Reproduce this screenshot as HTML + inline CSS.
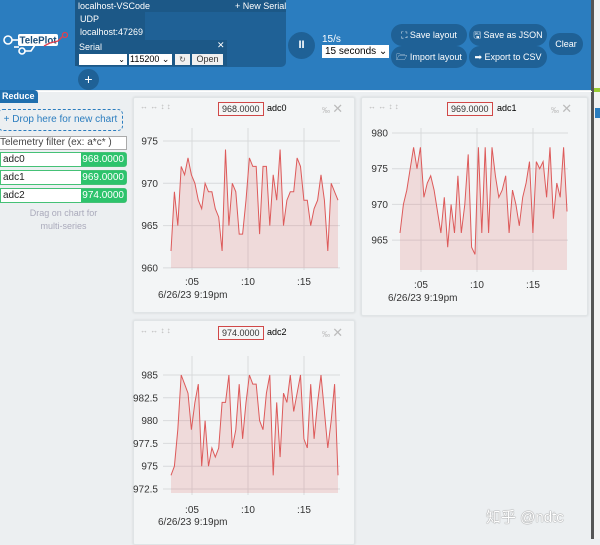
<!DOCTYPE html>
<html><head><meta charset="utf-8"><style>
*{box-sizing:border-box;margin:0;padding:0}
body{width:600px;height:539px;overflow:hidden;background:#eceff1;font-family:"Liberation Sans",sans-serif;position:relative}
.a{position:absolute}
#hdr{left:0;top:0;width:592px;height:90px;background:#2b7dbf}
.pill{position:absolute;background:#1f6196;color:#fff;border-radius:12px;font-size:9px;text-align:center;line-height:22px;height:22px}
.card{position:absolute;background:#f3f5f6;border:1px solid #e0e4e6;border-radius:2px;box-shadow:0 0 2px #d0d4d6}
.val{position:absolute;border:1px solid #d04848;font-size:9px;color:#333;padding:0 3px;line-height:12px;background:#f6f6f6}
.row{position:absolute;left:0;width:127px;height:15px;border:1px solid #45c176;border-radius:0 3px 3px 0;background:#fff;font-size:10px;line-height:13px;padding-left:2px;color:#222}
.row span{position:absolute;right:0;top:0;width:45px;height:13px;background:#2dc36c;color:#fff;text-align:right;padding-right:2px}
</style></head><body>
<div id="hdr" class="a"></div>
<svg class="a" style="left:0;top:26px" width="75" height="32" viewBox="0 0 75 32">
<g fill="none" stroke="#fff" stroke-width="1.6"><circle cx="8" cy="14" r="4"/><path d="M12 14h6"/><circle cx="22" cy="25" r="3"/><path d="M25 25h6l4-6"/><path d="M14 21h5"/></g>
<rect x="18" y="8" width="40" height="12" rx="2" fill="#fff"/>
<text x="19.5" y="17.5" font-size="10" font-weight="bold" fill="#1c4f7a" textLength="37" lengthAdjust="spacingAndGlyphs">TelePlot</text>
<path d="M44 20l6 -3 8-2 5-5" stroke="#e04050" stroke-width="1.4" fill="none"/><circle cx="65" cy="9" r="2.5" fill="none" stroke="#e04050" stroke-width="1.3"/>
</svg>
<div class="a" style="left:75px;top:0;width:211px;height:67px;background:#1f6196;border-radius:0 0 5px 5px"></div>
<div class="a" style="left:75px;top:0;width:211px;height:12px;background:#1c5887"></div>
<div class="a" style="left:78px;top:1px;font-size:9px;color:#fff">localhost-VSCode</div>
<div class="a" style="left:235px;top:1px;font-size:9px;color:#fff">+ New Serial</div>
<div class="a" style="left:75px;top:12px;width:70px;height:28px;background:#1c5887"></div>
<div class="a" style="left:80px;top:14px;font-size:9px;color:#fff">UDP</div>
<div class="a" style="left:80px;top:27px;font-size:9px;color:#fff">localhost:47269</div>
<div class="a" style="left:75px;top:40px;width:152px;height:26px;background:#1c5887"></div>
<div class="a" style="left:79px;top:42px;font-size:9px;color:#fff">Serial</div>
<div class="a" style="left:217px;top:40px;font-size:9px;color:#fff">✕</div>
<div class="a" style="left:79px;top:54px;width:48px;height:11px;background:#fff;font-size:8px;text-align:right;padding-right:2px;line-height:11px">⌄</div>
<div class="a" style="left:129px;top:54px;width:43px;height:11px;background:#fff;font-size:9px;line-height:11px;padding-left:1px">115200 ⌄</div>
<div class="a" style="left:175px;top:54px;width:15px;height:11px;background:#f0f0f0;font-size:8px;line-height:11px;text-align:center;color:#555">↻</div>
<div class="a" style="left:192px;top:54px;width:31px;height:11px;background:#f0f0f0;font-size:9px;line-height:11px;text-align:center;color:#333">Open</div>
<div class="a" style="left:78px;top:69px;width:21px;height:21px;border-radius:50%;background:#1f6196;color:#fff;text-align:center;font-size:14px;line-height:20px">+</div>
<div class="a" style="left:288px;top:32px;width:27px;height:27px;border-radius:50%;background:#1f6196;color:#fff;text-align:center;font-size:11px;line-height:27px;font-weight:bold">II</div>
<div class="a" style="left:322px;top:34px;font-size:10px;color:#fff">15/s</div>
<div class="a" style="left:322px;top:45px;width:67px;height:13px;background:#fff;font-size:10px;line-height:13px;padding-left:3px">15 seconds ⌄</div>
<div class="pill" style="left:391px;top:24px;width:76px">⛶ Save layout</div>
<div class="pill" style="left:391px;top:46px;width:76px">🗁 Import layout</div>
<div class="pill" style="left:469px;top:24px;width:78px">🖫 Save as JSON</div>
<div class="pill" style="left:469px;top:46px;width:78px">➡ Export to CSV</div>
<div class="pill" style="left:549px;top:33px;width:34px">Clear</div>
<div class="a" style="left:591px;top:0;width:3px;height:539px;background:#555"></div>
<div class="a" style="left:594px;top:0;width:6px;height:539px;background:#f2f2f2"></div>
<div class="a" style="left:594px;top:88px;width:6px;height:4px;background:#9c3"></div>
<div class="a" style="left:595px;top:108px;width:5px;height:10px;background:#2b7dbf"></div>
<div class="a" style="left:0;top:90px;width:38px;height:13px;background:#1f6fae;color:#fff;font-size:9px;font-weight:bold;line-height:13px;padding-left:2px;border-radius:0 4px 0 0">Reduce</div>
<div class="a" style="left:38px;top:91px;width:554px;height:1px;background:#fff"></div>
<div class="a" style="left:-2px;top:109px;width:125px;height:22px;border:1px dashed #2b7dbf;border-radius:5px;color:#2b7dbf;font-size:10px;line-height:20px;text-align:center">+ Drop here for new chart</div>
<div class="a" style="left:-2px;top:136px;width:129px;height:14px;background:#fff;border:1px solid #aaa;font-size:10px;line-height:12px;color:#444;padding-left:1px">Telemetry filter (ex: a*c* )</div>
<div class="row" style="top:152px">adc0<span>968.0000</span></div>
<div class="row" style="top:170px">adc1<span>969.0000</span></div>
<div class="row" style="top:188px">adc2<span>974.0000</span></div>
<div class="a" style="left:0;top:207px;width:127px;text-align:center;font-size:9px;color:#aab;line-height:13px">Drag on chart for<br>multi-series</div>
<div class="card" style="left:133px;top:97px;width:222px;height:216px"></div>
<div class="card" style="left:361px;top:97px;width:227px;height:219px"></div>
<div class="card" style="left:133px;top:320px;width:222px;height:225px"></div>
<div class="val" style="left:218px;top:102px">968.0000</div><div class="a" style="left:267px;top:103px;font-size:9px">adc0</div>
<div class="val" style="left:447px;top:102px">969.0000</div><div class="a" style="left:497px;top:103px;font-size:9px">adc1</div>
<div class="val" style="left:218px;top:326px">974.0000</div><div class="a" style="left:267px;top:327px;font-size:9px">adc2</div>
<div class="a" style="left:140px;top:102px;font-size:8px;color:#bbb">↔ ↔ ↕ ↕</div>
<div class="a" style="left:368px;top:102px;font-size:8px;color:#bbb">↔ ↔ ↕ ↕</div>
<div class="a" style="left:140px;top:326px;font-size:8px;color:#bbb">↔ ↔ ↕ ↕</div>
<div class="a" style="left:322px;top:101px;font-size:8px;color:#bbb">‰ <span style="font-size:13px">✕</span></div>
<div class="a" style="left:551px;top:101px;font-size:8px;color:#bbb">‰ <span style="font-size:13px">✕</span></div>
<div class="a" style="left:322px;top:325px;font-size:8px;color:#bbb">‰ <span style="font-size:13px">✕</span></div>
<svg id="s" class="a" style="left:0;top:0" width="600" height="539" font-family="Liberation Sans" font-size="10" fill="#333"></svg>
<div class="a" style="left:486px;top:506px;font-size:15px;color:#fff;text-shadow:0 0 1px #888,0 0 1px #888;font-family:'Liberation Sans','Noto Sans CJK SC',sans-serif">知乎 @ndtc</div>
<script>
var C=[
{v:[962,969,965,972,971,973,971,970,968,967,970,969,969,967,966,962,974,965,970,969,964,964,968,973,972,972,964,972,972,965,971,968,974,965,968,969,969,973,972,968,968,965,967,968,971,968,962,970,969,968],
x0:171,x1:338,top:975,ty:141,step:5,py:42.3,n:4,bot:268,gx0:163,gx1:340,vx:[192,248,304],vt:128,lx:158,xl:285,dl:298},
{v:[966,970,972,975,978,975,978,971,973,974,972,969,966,971,964,970,966,974,966,970,977,964,963,978,966,978,966,978,974,971,972,974,966,972,970,967,971,973,976,966,976,975,976,971,978,968,973,971,978,969],
x0:400,x1:567,top:980,ty:133,step:5,py:35.7,n:4,bot:270,gx0:392,gx1:568,vx:[421,477,533],vt:128,lx:388,xl:288,dl:301},
{v:[974,975,979,985,984,983,979,982,984,975,980,975,977,976,977,982,982,985,977,979,984,978,982,985,984,984,980,979,983,985,974,982,976,983,982,985,981,983,985,978,977,984,978,982,985,981,977,980,984,974],
x0:171,x1:338,top:985,ty:375,step:2.5,py:22.8,n:6,bot:493,gx0:163,gx1:340,vx:[192,248,304],vt:356,lx:158,xl:513,dl:525}];
var h='';
C.forEach(function(c){
 var k=c.py/c.step,pts=[];
 for(var i=0;i<c.v.length;i++){pts.push((c.x0+(c.x1-c.x0)*i/(c.v.length-1)).toFixed(1)+','+(c.ty+(c.top-c.v[i])*k).toFixed(1));}
 for(var j=0;j<c.n;j++){var y=c.ty+j*c.py;h+='<line x1="'+c.gx0+'" x2="'+c.gx1+'" y1="'+y+'" y2="'+y+'" stroke="#d8dadc"/>';
  var lab=(c.top-j*c.step);h+='<text x="'+c.lx+'" y="'+(y+3.5)+'" text-anchor="end">'+lab+'</text>';}
 c.vx.forEach(function(x,i){h+='<line x1="'+x+'" x2="'+x+'" y1="'+c.vt+'" y2="'+(c.bot+2)+'" stroke="#d8dadc"/>';
  h+='<text x="'+x+'" y="'+c.xl+'" text-anchor="middle">'+[':05',':10',':15'][i]+'</text>';});
 h+='<text x="'+(c.lx)+'" y="'+c.dl+'">6/26/23 9:19pm</text>';
 h+='<polygon points="'+c.x0+','+c.bot+' '+pts.join(' ')+' '+c.x1+','+c.bot+'" fill="rgba(225,110,110,0.2)"/>';
 h+='<polyline points="'+pts.join(' ')+'" fill="none" stroke="#dd5a5a" stroke-width="1"/>';
});
document.getElementById('s').innerHTML=h;
</script>
</body></html>
